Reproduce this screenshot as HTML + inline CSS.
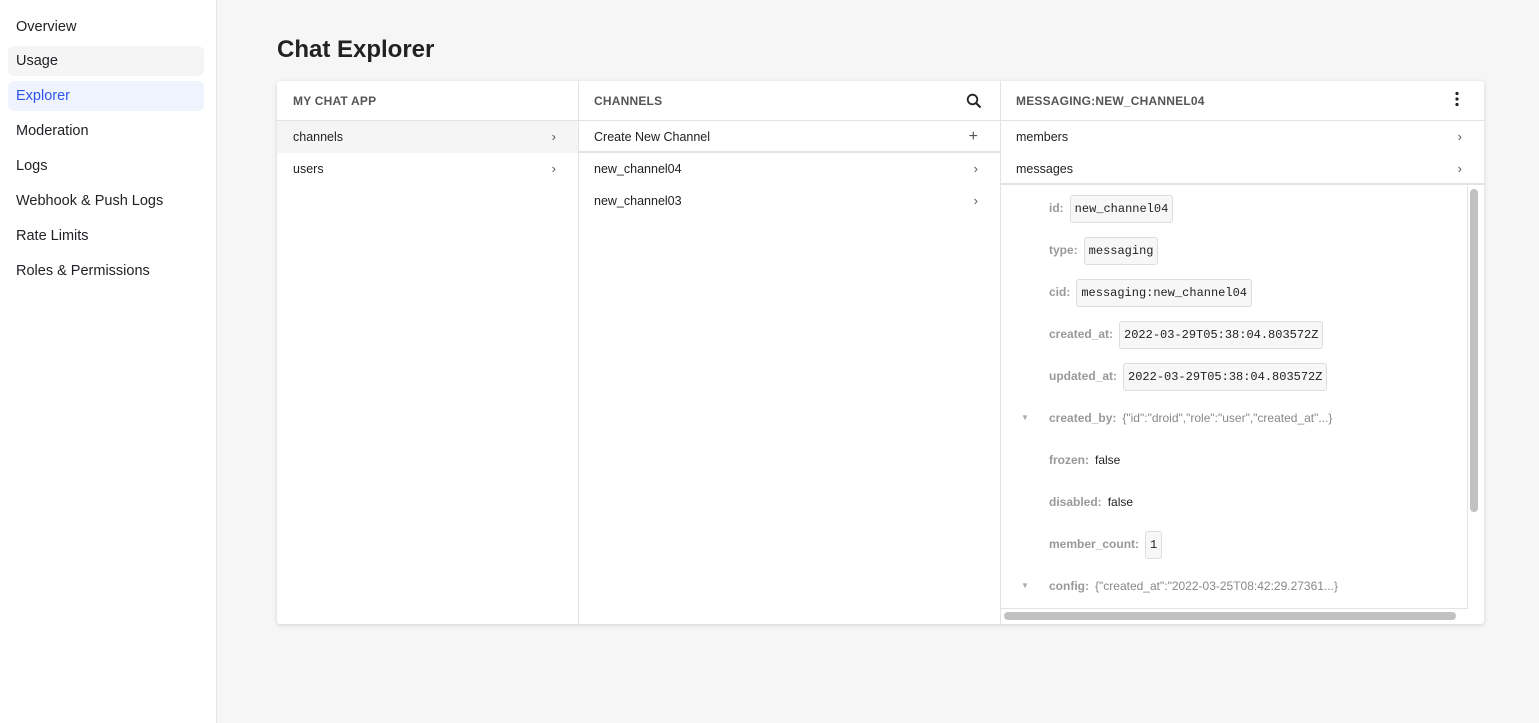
<!DOCTYPE html>
<html><head><meta charset="utf-8"><style>
*{box-sizing:border-box;margin:0;padding:0}
body{width:1539px;height:723px;background:#f6f6f6;font-family:"Liberation Sans",sans-serif;position:relative;overflow:hidden;color:#1f2024}
.side{position:absolute;left:0;top:0;width:217px;height:723px;background:#fff;border-right:1px solid #e4e4e4}
.nav{position:absolute;left:8px;width:196px;height:30px;border-radius:6px;padding-left:8px;line-height:31px;font-size:14.5px;color:#1f2024}
h1{position:absolute;left:277px;top:36px;font-size:24px;font-weight:bold;color:#222}
.card{position:absolute;left:277px;top:81px;width:1207px;height:543px;background:#fff;box-shadow:0 1px 4px rgba(0,0,0,.15);border-radius:3px;overflow:hidden}
.col{position:absolute;top:0;height:543px;border-right:1px solid #e2e2e2}
.hd{height:40px;border-bottom:1px solid #e2e2e2;font-size:12px;font-weight:bold;color:#555;line-height:40px;padding-left:16px;letter-spacing:.2px;position:relative}
.row{height:32px;line-height:32px;font-size:12.5px;padding-left:16px;position:relative;color:#222}
.chev{position:absolute;right:22px;top:0;color:#555;font-size:13px}
.kv{position:absolute;left:48px;font-size:12px;color:#999;font-weight:bold;height:28px;line-height:28px;white-space:nowrap}
.pill{display:inline-block;border:1px solid #ddd;background:#f7f7f7;border-radius:3px;font-family:"Liberation Mono",monospace;font-weight:normal;color:#222;padding:0 4px;height:28px;line-height:26px;margin-left:6px;font-size:12px}
.val{font-weight:normal;color:#222;margin-left:6px}
.gv{font-weight:normal;color:#888;margin-left:6px}
.tri{position:absolute;left:20px;font-size:8px;color:#aaa}
</style></head><body>
<div class="side">
<div class="nav" style="top:12px">Overview</div>
<div class="nav" style="top:46px;background:#f5f5f5">Usage</div>
<div class="nav" style="top:81px;background:#eff3fe;color:#2f54eb">Explorer</div>
<div class="nav" style="top:116px">Moderation</div>
<div class="nav" style="top:151px">Logs</div>
<div class="nav" style="top:186px">Webhook &amp; Push Logs</div>
<div class="nav" style="top:221px">Rate Limits</div>
<div class="nav" style="top:256px">Roles &amp; Permissions</div>
</div>
<h1>Chat Explorer</h1>
<div class="card">
<div class="col" style="left:0;width:302px">
<div class="hd">MY CHAT APP</div>
<div class="row" style="background:#f5f5f5">channels<span class="chev">›</span></div>
<div class="row">users<span class="chev">›</span></div>
</div>
<div class="col" style="left:301px;width:423px">
<div class="hd">CHANNELS<svg style="position:absolute;right:18px;top:12px" width="16" height="16" viewBox="0 0 16 16"><circle cx="6.5" cy="6.5" r="4.8" fill="none" stroke="#222" stroke-width="1.8"/><path d="M10 10l4.5 4.5" stroke="#222" stroke-width="2"/></svg></div>
<div class="row" style="border-bottom:2px solid #e2e2e2">Create New Channel<span class="chev" style="font-size:16px">+</span></div>
<div class="row">new_channel04<span class="chev">›</span></div>
<div class="row">new_channel03<span class="chev">›</span></div>
</div>
<div class="col" style="left:723px;width:484px;border-right:none">
<div class="hd">MESSAGING:NEW_CHANNEL04<svg style="position:absolute;right:25px;top:10px" width="4" height="16"><circle cx="2" cy="2.5" r="1.6" fill="#222"/><circle cx="2" cy="8" r="1.6" fill="#222"/><circle cx="2" cy="13.5" r="1.6" fill="#222"/></svg></div>
<div class="row">members<span class="chev">›</span></div>
<div class="row" style="border-bottom:2px solid #e2e2e2">messages<span class="chev">›</span></div>
<div style="position:absolute;left:1px;top:106px;width:467px;height:422px;border-right:1px solid #e2e2e2;border-bottom:1px solid #e2e2e2">
<div class="kv" style="top:7px">id:<span class="pill">new_channel04</span></div>
<div class="kv" style="top:49px">type:<span class="pill">messaging</span></div>
<div class="kv" style="top:91px">cid:<span class="pill">messaging:new_channel04</span></div>
<div class="kv" style="top:133px">created_at:<span class="pill">2022-03-29T05:38:04.803572Z</span></div>
<div class="kv" style="top:175px">updated_at:<span class="pill">2022-03-29T05:38:04.803572Z</span></div>
<div class="tri" style="top:226px">▼</div>
<div class="kv" style="top:217px">created_by:<span class="gv">{"id":"droid","role":"user","created_at"...}</span></div>
<div class="kv" style="top:259px">frozen:<span class="val">false</span></div>
<div class="kv" style="top:301px">disabled:<span class="val">false</span></div>
<div class="kv" style="top:343px">member_count:<span class="pill">1</span></div>
<div class="tri" style="top:394px">▼</div>
<div class="kv" style="top:385px">config:<span class="gv">{"created_at":"2022-03-25T08:42:29.27361...}</span></div>
</div>
<div style="position:absolute;left:470px;top:108px;width:8px;height:323px;background:#c1c1c1;border-radius:4px"></div>
<div style="position:absolute;left:4px;top:531px;width:452px;height:8px;background:#c1c1c1;border-radius:4px"></div>
</div>
</div>
</body></html>
